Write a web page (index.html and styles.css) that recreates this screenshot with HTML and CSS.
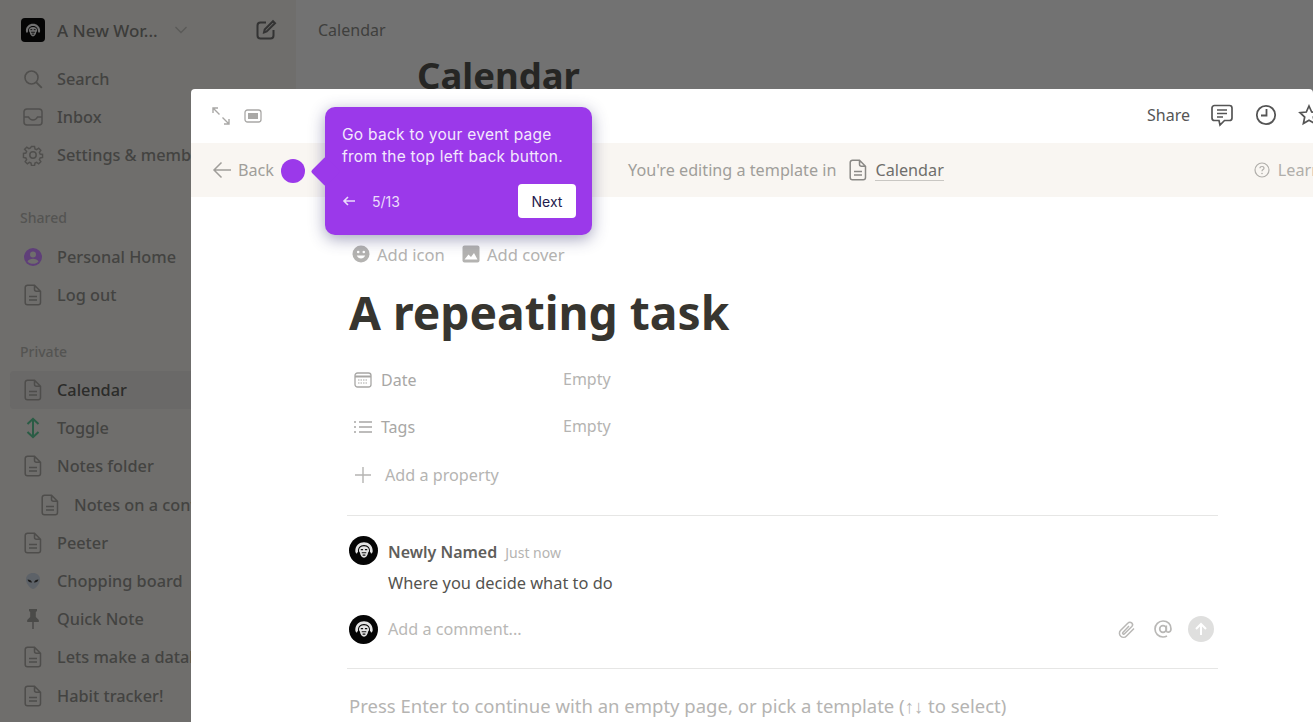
FILE: index.html
```html
<!DOCTYPE html>
<html lang="en">
<head>
    <meta charset="UTF-8">
    <title>Calendar</title>
    <link rel="stylesheet" href="styles.css">
</head>
<body>
    <svg class="defs" width="0" height="0">
        <symbol id="doc" viewBox="0 0 18 22">
            <path d="M3.500 1.200h7l6 6v11.300a2.300 2.300 0 0 1-2.300 2.300H3.500a2.300 2.300 0 0 1-2.300-2.300V3.500a2.300 2.300 0 0 1 2.300-2.300z M10.500 1.200v4a2 2 0 0 0 2 2h4 M5 12.500h8 M5 16h8" fill="none" stroke="currentColor" stroke-width="1.500"/>
        </symbol>
        <symbol id="monkey" viewBox="0 0 24 24">
            <path d="M2.500 13C2.500 7 7 3.500 12 3.500S21.500 7 21.500 13c0 1.500-.8 2.500-1.800 3-.2-1-.7-1.500-1.200-2 .6-4-2-7.500-6.500-7.500S4.900 10 5.500 14c-.5.500-1 1-1.200 2-1-.5-1.800-1.500-1.800-3z" fill="currentColor"/>
            <path d="M12 8c-3.500 0-5.500 1.800-5.500 4.500 0 1 .5 1.800 1 2.300.5 3.200 2.200 5.700 4.500 5.700s4-2.500 4.500-5.700c.5-.5 1-1.300 1-2.300C17.500 9.800 15.500 8 12 8z" fill="currentColor"/>
            <path d="M8.500 11.500h2.500 M13 11.500h2.500 M9.500 15h5 M10.500 17.500h3" stroke="#111" stroke-width="1.300" fill="none"/>
        </symbol>
    </svg>

    <div class="app">
        <aside class="sidebar">
            <div class="workspace">
                <span class="logo"><svg width="18" height="18"><use href="#monkey"/></svg></span>
                <span class="workspace-name">A New Wor...</span>
                <svg class="chevron" width="14" height="8" viewBox="0 0 14 8"><path d="M1.500 1l5.500 5.500L12.500 1" fill="none" stroke="currentColor" stroke-width="1.300"/></svg>
                <svg class="compose" width="22" height="22" viewBox="0 0 22 22"><path d="M11 3.500H5.500a3 3 0 0 0-3 3v10a3 3 0 0 0 3 3h10a3 3 0 0 0 3-3V11 M9 13.500l.7-3L18 2.200l2 2-8.300 8.300z" fill="none" stroke="currentColor" stroke-width="2"/></svg>
            </div>

            <nav class="nav">
                <a class="nav-row"><svg class="nav-icon" width="20" height="20" viewBox="0 0 20 20"><circle cx="8.500" cy="8.500" r="6.500" fill="none" stroke="currentColor" stroke-width="1.600"/><path d="M13.300 13.300l5.500 5.500" stroke="currentColor" stroke-width="1.800"/></svg>Search</a>
                <a class="nav-row"><svg class="nav-icon" width="22" height="20" viewBox="0 0 22 20"><path d="M5 2h12a3 3 0 0 1 3 2.500V15a3 3 0 0 1-3 3H5a3 3 0 0 1-3-3V4.500A3 3 0 0 1 5 2z M2 10h4.500c1 2 2.500 3 4.500 3s3.500-1 4.500-3H20" fill="none" stroke="currentColor" stroke-width="1.500"/></svg>Inbox</a>
                <a class="nav-row"><svg class="nav-icon" width="22" height="22" viewBox="0 0 22 22"><circle cx="11" cy="11" r="3.200" fill="none" stroke="currentColor" stroke-width="1.500"/><path d="M9.300 1.500h3.400l.5 2.700 1.800.8 2.300-1.600 2.400 2.400-1.600 2.300.8 1.800 2.700.5v3.400l-2.700.5-.8 1.800 1.600 2.300-2.400 2.400-2.300-1.600-1.800.8-.5 2.700H9.300l-.5-2.700-1.800-.8-2.300 1.600-2.400-2.400 1.600-2.300-.8-1.800-2.700-.5V9.300l2.700-.5.8-1.800L1.700 4.700l2.400-2.400L6.400 3.900 8.200 3.100z" transform="translate(1.100 1.100) scale(.9)" fill="none" stroke="currentColor" stroke-width="1.600"/></svg>Settings &amp; members</a>
            </nav>

            <div class="nav-label label-shared">Shared</div>
            <nav class="nav">
                <a class="nav-row"><svg class="nav-icon" width="20" height="20" viewBox="0 0 20 20"><circle cx="10" cy="10" r="9" fill="#5f3f79"/><circle cx="10" cy="7.500" r="3" fill="#6f6e6c"/><path d="M4.500 14.500c1-2 3-2.800 5.500-2.800s4.500.8 5.500 2.800c-1.200 1.500-3.300 2.300-5.500 2.300s-4.300-.8-5.500-2.300z" fill="#6f6e6c"/></svg>Personal Home</a>
                <a class="nav-row"><svg class="nav-icon doc-icon" width="18" height="22"><use href="#doc"/></svg>Log out</a>
            </nav>

            <div class="nav-label label-private">Private</div>
            <nav class="nav">
                <a class="nav-row is-active"><svg class="nav-icon doc-icon" width="18" height="22"><use href="#doc"/></svg>Calendar</a>
                <a class="nav-row"><svg class="nav-icon toggle-icon" width="16" height="22" viewBox="0 0 16 22"><path d="M8 2v18 M2.500 7L8 1.800 13.500 7 M2.500 15L8 20.200 13.500 15" fill="none" stroke="currentColor" stroke-width="2"/></svg>Toggle</a>
                <a class="nav-row"><svg class="nav-icon doc-icon" width="18" height="22"><use href="#doc"/></svg>Notes folder</a>
                <a class="nav-row is-nested"><svg class="nav-icon doc-icon" width="18" height="22"><use href="#doc"/></svg>Notes on a conversation</a>
                <a class="nav-row"><svg class="nav-icon doc-icon" width="18" height="22"><use href="#doc"/></svg>Peeter</a>
                <a class="nav-row"><svg class="nav-icon" width="16" height="18" viewBox="0 0 16 18"><path d="M8 1c4 0 7 2.500 7 6.500S10.500 17 8 17 1 11.500 1 7.500 4 1 8 1z" fill="#5d6268"/><path d="M2.500 7.500c2.500 0 4 1.200 4.500 3-2.500.2-4-1-4.500-3z M13.500 7.500c-2.500 0-4 1.200-4.500 3 2.500.2 4-1 4.500-3z" fill="#1c1c1c"/></svg>Chopping board</a>
                <a class="nav-row"><svg class="nav-icon" width="14" height="22" viewBox="0 0 14 22"><path d="M3 1h8v2L9.800 4v5l3 3v2H1.200v-2l3-3V4L3 3z" fill="#4a4a48"/><path d="M7 14v7" stroke="#4a4a48" stroke-width="1.500"/></svg>Quick Note</a>
                <a class="nav-row"><svg class="nav-icon doc-icon" width="18" height="22"><use href="#doc"/></svg>Lets make a database</a>
                <a class="nav-row"><svg class="nav-icon doc-icon" width="18" height="22"><use href="#doc"/></svg>Habit tracker!</a>
            </nav>
        </aside>

        <main class="main">
            <div class="crumb">Calendar</div>
            <h1 class="main-title">Calendar</h1>
        </main>
    </div>

    <section class="modal">
        <header class="modal-top">
            <svg class="top-icon" width="20" height="20" viewBox="0 0 20 20"><path d="M2 2l6.500 6.500 M2 7V2h5 M11.500 11.500L18 18 M18 13v5h-5" fill="none" stroke="currentColor" stroke-width="1.400"/></svg>
            <svg class="top-icon" width="18" height="14" viewBox="0 0 18 14"><rect x="1" y="1" width="16" height="12" rx="2.500" fill="none" stroke="currentColor" stroke-width="1.300"/><rect x="4" y="4" width="10" height="6" fill="currentColor"/></svg>
            <div class="top-actions">
                <span class="share">Share</span>
                <svg width="24" height="24" viewBox="0 0 24 24"><path d="M4.500 2.500h15a2.500 2.500 0 0 1 2.500 2.500v10a2.500 2.500 0 0 1-2.500 2.500h-5L10 22l-1-4.500H4.500A2.500 2.500 0 0 1 2 15V5a2.500 2.500 0 0 1 2.500-2.500z M7 7h10 M7 10.500h10 M7 14h6" fill="none" stroke="#555" stroke-width="1.700"/></svg>
                <svg width="22" height="22" viewBox="0 0 22 22"><circle cx="11" cy="11" r="9.200" fill="none" stroke="#555" stroke-width="1.800"/><path d="M11.500 5v6.500H6" fill="none" stroke="#555" stroke-width="1.800"/></svg>
                <svg width="22" height="22" viewBox="0 0 22 22"><path d="M11 2l2.700 6 6.300.7-4.700 4.300 1.300 6.500L11 16.200 5.400 19.500 6.700 13 2 8.700 8.300 8z" fill="none" stroke="#555" stroke-width="1.700"/></svg>
            </div>
        </header>

        <div class="banner">
            <a class="back"><svg width="20" height="18" viewBox="0 0 20 18"><path d="M19 9H2 M9.500 1.500L2 9l7.500 7.500" fill="none" stroke="currentColor" stroke-width="1.500"/></svg>Back</a>
            <div class="banner-note">
                You're editing a template in
                <svg class="banner-doc" width="18" height="22"><use href="#doc"/></svg>
                <span class="banner-link">Calendar</span>
            </div>
            <div class="learn">
                <svg width="16" height="16" viewBox="0 0 16 16"><circle cx="8" cy="8" r="7" fill="none" stroke="currentColor" stroke-width="1.200"/><path d="M6 6.300c0-1.200 1-1.800 2-1.800s2 .6 2 1.700c0 1.400-2 1.400-2 3" fill="none" stroke="currentColor" stroke-width="1.200"/><circle cx="8" cy="11.500" r=".8" fill="currentColor"/></svg>
                <span class="learn-text">Learn</span>
            </div>
        </div>

        <div class="page">
            <div class="page-actions">
                <span class="page-action"><svg width="18" height="18" viewBox="0 0 18 18"><circle cx="9" cy="9" r="8.500" fill="currentColor"/><circle cx="6.200" cy="7" r="1.300" fill="#fff"/><circle cx="11.800" cy="7" r="1.300" fill="#fff"/><path d="M4.800 10.500c.8 2 2.400 3 4.200 3s3.400-1 4.200-3z" fill="#fff"/></svg>Add icon</span>
                <span class="page-action"><svg width="18" height="18" viewBox="0 0 18 18"><rect x=".5" y=".5" width="17" height="17" rx="2" fill="currentColor"/><path d="M2.500 14.500l4-5 2.500 2.500 3-4 3.500 6.500z" fill="#fff"/></svg>Add cover</span>
            </div>

            <h2 class="page-title">A repeating task</h2>

            <div class="props">
                <div class="prop">
                    <span class="prop-name"><svg width="18" height="16" viewBox="0 0 18 16"><rect x="1" y="1" width="16" height="14" rx="2.500" fill="none" stroke="currentColor" stroke-width="1.300"/><path d="M1 4.500h16" stroke="currentColor" stroke-width="2"/><path d="M4 8h10 M4 11h10" stroke="currentColor" stroke-width="1.200" stroke-dasharray="1.500 1"/></svg>Date</span>
                    <span class="prop-value">Empty</span>
                </div>
                <div class="prop">
                    <span class="prop-name"><svg width="18" height="14" viewBox="0 0 18 14"><path d="M5 2h13 M5 7h13 M5 12h13 M0 2h2 M0 7h2 M0 12h2" fill="none" stroke="currentColor" stroke-width="1.300"/></svg>Tags</span>
                    <span class="prop-value">Empty</span>
                </div>
                <div class="prop add-prop">
                    <span class="prop-name"><svg width="18" height="18" viewBox="0 0 18 18"><path d="M9 1v16 M1 9h16" fill="none" stroke="currentColor" stroke-width="1.400"/></svg>Add a property</span>
                </div>
            </div>

            <div class="comments">
                <div class="comment">
                    <span class="avatar"><svg width="22" height="22"><use href="#monkey"/></svg></span>
                    <div class="comment-body">
                        <div class="comment-head"><strong>Newly Named</strong><small>Just now</small></div>
                        <p>Where you decide what to do</p>
                    </div>
                </div>
                <div class="comment-new">
                    <span class="avatar"><svg width="22" height="22"><use href="#monkey"/></svg></span>
                    <span class="comment-input">Add a comment...</span>
                    <svg class="clip" width="20" height="20" viewBox="0 0 20 20"><path d="M17 9.500l-7.500 7.500a4 4 0 0 1-6-5.500L11 4a2.500 2.500 0 0 1 3.800 3.500L7.500 14.800a1 1 0 0 1-1.600-1.400L12 7" fill="none" stroke="currentColor" stroke-width="1.500"/></svg>
                    <svg class="at" width="20" height="20" viewBox="0 0 20 20"><circle cx="10" cy="10" r="3.300" fill="none" stroke="currentColor" stroke-width="1.700"/><path d="M13.300 6.500v5c0 2.500 4.500 2.500 4.700-1.500C18.200 5 14.500 2 10 2a8 8 0 0 0 0 16c1.500 0 2.700-.3 4-1" fill="none" stroke="currentColor" stroke-width="1.700"/></svg>
                    <span class="send"><svg width="14" height="14" viewBox="0 0 14 14"><path d="M7 13V2 M2 7l5-5 5 5" fill="none" stroke="#fff" stroke-width="2"/></svg></span>
                </div>
            </div>

            <p class="template-hint">Press Enter to continue with an empty page, or pick a template (↑↓ to select)</p>
        </div>
    </section>

    <span class="tour-dot"></span>
    <div class="tour-tip">
        <p>Go back to your event page from the top left back button.</p>
        <div class="tour-foot">
            <svg width="14" height="10" viewBox="0 0 14 10"><path d="M13 5H2 M6 1L2 5l4 4" fill="none" stroke="currentColor" stroke-width="1.600"/></svg>
            <span class="tour-count">5/13</span>
            <button class="tour-next">Next</button>
        </div>
    </div>
</body>
</html>
```

FILE: styles.css
```css
* {
    margin: 0;
    padding: 0;
    box-sizing: border-box;
}

html, body {
    height: 100%;
    overflow: hidden;
}

body {
    font-family: 'Noto Sans', sans-serif;
    background: #727272;
    color: #3f3f3d;
}

.defs {
    position: absolute;
}

.app {
    display: flex;
    height: 722px;
    overflow: hidden;
}

/* sidebar */
.sidebar {
    width: 296px;
    flex-shrink: 0;
    background: #6f6e6c;
    padding-left: 10px;
}

.workspace {
    display: flex;
    align-items: center;
    height: 60px;
    padding-left: 11px;
}

.logo {
    width: 24px;
    height: 24px;
    background: #050505;
    border-radius: 4px;
    display: flex;
    align-items: center;
    justify-content: center;
    margin-right: 12px;
    color: #707070;
}

.workspace-name {
    font-size: 17px;
    width: 105px;
    white-space: nowrap;
    font-weight: 500;
    color: #3c3c3a;
}

.chevron {
    color: #5a5a58;
    margin-left: 12px;
}

.compose {
    margin-left: 67px;
    color: #333;
}

.nav-row {
    display: flex;
    align-items: center;
    height: 38.2px;
    width: 286px;
    font-size: 16.300px;
    font-weight: 500;
    white-space: nowrap;
    color: #434341;
    position: relative;
    padding-left: 47px;
}

.nav-icon {
    position: absolute;
    left: 23px;
    top: 50%;
    transform: translate(-50%, -50%);
    color: #504f4d;
}

.doc-icon {
    color: #4e4d4b;
}

.toggle-icon {
    color: #2a5c45;
}

.is-active {
    background: #6a6968;
    border-radius: 4px;
    color: #2c2c2a;
}

.is-nested {
    padding-left: 64px;
}

.is-nested .nav-icon {
    left: 40px;
}

.nav-label {
    font-size: 14px;
    font-weight: 500;
    color: #545452;
    padding-left: 10px;
    height: 20px;
    line-height: 20px;
}

.label-shared {
    margin-top: 33px;
    margin-bottom: 10px;
}

.label-private {
    margin-top: 28px;
    margin-bottom: 9px;
}

/* page behind the modal */
.main {
    flex: 1;
    padding-left: 22px;
}

.crumb {
    font-size: 16px;
    height: 60px;
    line-height: 60px;
    color: #3f3f3d;
}

.main-title {
    font-size: 36.500px;
    font-weight: 700;
    color: #262624;
    line-height: 30px;
    margin-left: 99px;
}

/* modal */
.modal {
    position: absolute;
    left: 191px;
    top: 89px;
    width: 1122px;
    height: 633px;
    overflow: hidden;
    background: #fff;
    border-radius: 4px 4px 0 0;
}

.modal-top {
    display: flex;
    align-items: center;
    height: 54px;
    padding-left: 20px;
    color: #a9a8a6;
}

.modal-top svg {
    flex-shrink: 0;
}

.top-icon + .top-icon {
    margin-left: 13px;
}

.top-actions {
    display: flex;
    align-items: center;
    gap: 21px;
    margin-left: 885px;
    margin-top: -2px;
    flex-shrink: 0;
}

.share {
    font-size: 16px;
    color: #555;
    margin-right: -1px;
}

.banner {
    display: flex;
    align-items: center;
    height: 54px;
    background: #f9f6f2;
    color: #a09e9a;
    font-size: 16.200px;
    padding-left: 21px;
    white-space: nowrap;
}

.back {
    display: flex;
    align-items: center;
    gap: 6px;
}

.banner-note {
    display: flex;
    align-items: center;
    margin-left: 354px;
}

.banner-doc {
    margin: 0 8px 0 13px;
    color: #8a8986;
}

.banner-link {
    color: #6f6e6b;
    border-bottom: 1px solid #c9c7c3;
    line-height: 20px;
}

.learn {
    display: flex;
    align-items: center;
    gap: 8px;
    margin-left: 310px;
    color: #b0aeaa;
}

.page {
    padding: 46px 0 0 158px;
    width: 1027px;
}

.page-actions {
    display: flex;
    gap: 17px;
    height: 22px;
    padding-left: 3px;
}

.page-action {
    display: flex;
    align-items: center;
    gap: 7px;
    font-size: 16.600px;
    color: #b4b3b1;
}

.page-title {
    font-size: 46.200px;
    font-weight: 700;
    color: #37352f;
    line-height: 60px;
    margin-top: 18px;
}

.props {
    margin-top: 13px;
}

.prop {
    display: flex;
    align-items: center;
    height: 47.500px;
    font-size: 16px;
    color: #a8a7a5;
    padding-left: 5px;
}

.prop-name {
    display: flex;
    align-items: center;
    gap: 9px;
    width: 209px;
}

.prop-value {
    color: #b5b4b2;
    margin-top: -2px;
}

.add-prop {
    color: #b5b4b2;
    font-size: 16.200px;
}

.add-prop .prop-name {
    gap: 13px;
}

.comments {
    margin-top: 16px;
    margin-left: -2px;
    border-top: 1px solid #e6e6e5;
    border-bottom: 1px solid #e6e6e5;
    height: 154px;
    padding: 20px 0 0 2px;
}

.comment {
    display: flex;
    gap: 10px;
}

.avatar {
    width: 29px;
    height: 29px;
    flex-shrink: 0;
    background: #050505;
    border-radius: 50%;
    display: flex;
    align-items: center;
    justify-content: center;
    color: #e4e4e4;
}

.comment-head {
    display: flex;
    align-items: baseline;
    gap: 8px;
    height: 32px;
    line-height: 32px;
}

.comment-head strong {
    font-size: 16px;
    font-weight: 600;
    color: #5f5e5b;
}

.comment-head small {
    font-size: 14px;
    color: #b5b4b2;
}

.comment-body p {
    font-size: 16.400px;
    line-height: 30px;
    color: #54534f;
}

.comment-new {
    display: flex;
    align-items: center;
    height: 29px;
    margin-top: 17px;
    color: #b9b8b6;
    padding-right: 4px;
}

.comment-input {
    flex: 1;
    font-size: 16.200px;
    margin-left: 10px;
}

.at {
    margin-left: 16px;
}

.send {
    width: 26px;
    height: 26px;
    border-radius: 50%;
    background: #dfdfde;
    display: flex;
    align-items: center;
    justify-content: center;
    margin-left: 15px;
}

.template-hint {
    font-size: 18.500px;
    color: #b5b4b2;
    margin-top: 24px;
    white-space: nowrap;
}

/* tour tooltip */
.tour-dot {
    position: absolute;
    left: 281px;
    top: 159px;
    width: 24px;
    height: 24px;
    border-radius: 50%;
    background: #9b39ea;
}

.tour-tip {
    position: absolute;
    left: 325px;
    top: 107px;
    width: 267px;
    height: 128px;
    padding: 17px 16px 17px 17px;
    background: #9b39ea;
    border-radius: 10px;
    box-shadow: 0 4px 16px rgba(50, 50, 110, 0.45);
    color: #f3e8fd;
    font-family: 'Inter', sans-serif;
}

.tour-tip::before {
    content: "";
    position: absolute;
    left: -10.500px;
    top: 53.500px;
    width: 21px;
    height: 21px;
    background: #9b39ea;
    transform: rotate(45deg);
    border-radius: 2px;
}

.tour-tip p {
    font-size: 15.500px;
    letter-spacing: 0.27px;
    line-height: 21.500px;
    position: relative;
}

.tour-foot {
    display: flex;
    align-items: center;
    margin-top: 17px;
    color: #ebdcfb;
    position: relative;
}

.tour-count {
    font-size: 14px;
    margin-left: 16px;
    flex: 1;
}

.tour-next {
    width: 58px;
    height: 34px;
    border: none;
    border-radius: 4px;
    background: #fff;
    color: #1f1b4d;
    font-family: inherit;
    font-size: 14px;
    font-weight: 400;
}
```
